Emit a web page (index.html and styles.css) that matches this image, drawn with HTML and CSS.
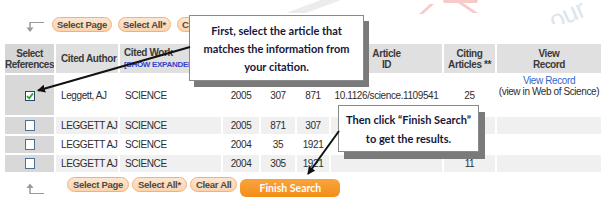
FILE: index.html
```html
<!DOCTYPE html>
<html lang="en">
<head>
<meta charset="utf-8">
<title>Cited Reference Search - Select References</title>
<link rel="stylesheet" href="styles.css">
</head>
<body>
<div class="page">
  <svg class="watermark" width="613" height="24" viewBox="0 0 613 24" aria-hidden="true">
    <polygon points="286,13 306,13 341,0 321,0" fill="#ececec"/>
    <polygon points="419,14 423,14 434,4 430,4" fill="#f7caca"/>
    <polygon points="443,0 478,0 477,3 444,3" fill="#f7caca"/>
    <polygon points="458,3 463,3 478,13 473,13" fill="#f7caca"/>
    <text x="548" y="22" transform="rotate(-24 570 12)" class="wm-text">our</text>
  </svg>

  <div class="toolbar toolbar-top">
    <svg class="nav-icon" width="20" height="12" viewBox="0 0 20 12" aria-hidden="true">
      <path d="M5 1.5 H19" stroke="#9a9a9a" stroke-width="1" fill="none"/>
      <path d="M5 1 V7" stroke="#9a9a9a" stroke-width="1.5" fill="none"/>
      <polygon points="1.5,6.5 8.5,6.5 5,11" fill="#9a9a9a"/>
    </svg>
    <span class="btn">Select Page</span>
    <span class="btn">Select All*</span>
    <span class="btn">Clear All</span>
  </div>

  <table class="refs">
    <colgroup>
      <col class="c-sel"><col class="c-author"><col class="c-work"><col class="c-year"><col class="c-vol"><col class="c-page"><col class="c-id"><col class="c-citing"><col class="c-view">
    </colgroup>
    <thead>
      <tr>
        <th class="sel center">Select<br>References</th>
        <th class="left">Cited Author</th>
        <th class="left top">Cited Work<br><a class="expand" href="#">[SHOW EXPANDED TITLES]</a></th>
        <th class="center"></th>
        <th class="center"></th>
        <th class="center"></th>
        <th class="center">Article<br>ID</th>
        <th class="center">Citing<br>Articles **</th>
        <th class="center">View<br>Record</th>
      </tr>
    </thead>
    <tbody>
      <tr class="row-tall">
        <td class="sel center"><span class="cb checked"><svg width="8" height="8" viewBox="0 0 8 8"><path d="M1 4.2 L3.2 6.4 L7 1.4" stroke="#2fa82f" stroke-width="1.8" fill="none"/></svg></span></td>
        <td>Leggett, AJ</td>
        <td>SCIENCE</td>
        <td class="center">2005</td>
        <td class="center">307</td>
        <td class="center">871</td>
        <td class="center">10.1126/science.1109541</td>
        <td class="center">25</td>
        <td class="center view"><a class="link" href="#">View Record</a><br>(view in Web of Science)</td>
      </tr>
      <tr class="stripe">
        <td class="sel center"><span class="cb"></span></td>
        <td>LEGGETT AJ</td>
        <td>SCIENCE</td>
        <td class="center">2005</td>
        <td class="center">871</td>
        <td class="center">307</td>
        <td></td>
        <td class="center"></td>
        <td></td>
      </tr>
      <tr>
        <td class="sel center"><span class="cb"></span></td>
        <td>LEGGETT AJ</td>
        <td>SCIENCE</td>
        <td class="center">2004</td>
        <td class="center">35</td>
        <td class="center">1921</td>
        <td></td>
        <td class="center"></td>
        <td></td>
      </tr>
      <tr class="stripe">
        <td class="sel center"><span class="cb"></span></td>
        <td>LEGGETT AJ</td>
        <td>SCIENCE</td>
        <td class="center">2004</td>
        <td class="center">305</td>
        <td class="center">1921</td>
        <td></td>
        <td class="center">11</td>
        <td></td>
      </tr>
    </tbody>
  </table>

  <div class="toolbar toolbar-bottom">
    <svg class="nav-icon" width="20" height="12" viewBox="0 0 20 12" aria-hidden="true">
      <polygon points="1.5,5 8.5,5 5,0.5" fill="#9a9a9a"/>
      <path d="M5 5 V11" stroke="#9a9a9a" stroke-width="1.5" fill="none"/>
      <path d="M5 10.5 H19" stroke="#9a9a9a" stroke-width="1" fill="none"/>
    </svg>
    <span class="btn">Select Page</span>
    <span class="btn">Select All*</span>
    <span class="btn">Clear All</span>
    <span class="btn-finish">Finish Search</span>
  </div>

  <div class="callout callout-first">First, select the article that<br>matches the information from<br>your citation.</div>
  <div class="callout callout-then">Then click “Finish Search”<br>to get the results.</div>

  <svg class="arrows" width="613" height="213" viewBox="0 0 613 213" aria-hidden="true">
    <defs>
      <marker id="head" markerWidth="8" markerHeight="8" refX="7" refY="4" orient="auto" markerUnits="userSpaceOnUse">
        <polygon points="0,0 8,4 0,8" fill="#111"/>
      </marker>
    </defs>
    <line x1="190" y1="47" x2="38" y2="90.5" stroke="#111" stroke-width="2" marker-end="url(#head)"/>
    <line x1="339" y1="131" x2="308" y2="174" stroke="#111" stroke-width="2" marker-end="url(#head)"/>
  </svg>
</div>
</body>
</html>
```

FILE: styles.css
```css
* { box-sizing: border-box; }

html, body {
  margin: 0;
  padding: 0;
  background: #ffffff;
}

body {
  font-family: "Liberation Sans", Arial, sans-serif;
  font-size: 10px;
  letter-spacing: -0.4px;
  color: #2e2e2e;
}

.page {
  position: relative;
  width: 613px;
  height: 213px;
  overflow: hidden;
}

.watermark {
  position: absolute;
  left: 0;
  top: 0;
  pointer-events: none;
}

.wm-text {
  font-family: "Liberation Sans", Arial, sans-serif;
  font-size: 26px;
  fill: #dde5ef;
}

/* toolbars */
.toolbar {
  display: flex;
  align-items: flex-start;
  padding-left: 25px;
}

.toolbar-top {
  padding-top: 17px;
  gap: 6px;
}

.toolbar-top .nav-icon {
  margin-top: 4px;
  margin-right: 1px;
}

.toolbar-bottom {
  padding-top: 3px;
  gap: 3px;
}

.toolbar-bottom .nav-icon {
  margin-top: 6px;
  margin-right: 19px;
}

.btn {
  display: inline-flex;
  align-items: center;
  height: 15px;
  padding: 0 4px;
  border: 1px solid #f1b27a;
  border-radius: 8px;
  background: linear-gradient(#fee6cf, #fbd3ad);
  color: #4a4a4a;
  font-weight: bold;
  font-size: 9.5px;
  letter-spacing: -0.3px;
  white-space: nowrap;
}

.toolbar-bottom .btn {
  padding: 0 5px;
}

.btn-finish {
  display: inline-flex;
  align-items: center;
  justify-content: center;
  width: 100px;
  height: 18px;
  margin-top: 2px;
  border-radius: 6px;
  background: linear-gradient(#f9a440, #f58d17);
  color: #ffffff;
  font-family: Lato, "Liberation Sans", sans-serif;
  font-weight: bold;
  font-size: 10.5px;
  letter-spacing: 0;
}

/* table */
.refs {
  margin: 9px 0 0 3px;
  width: 600px;
  table-layout: fixed;
  border-collapse: separate;
  border-spacing: 2px;
}

.c-sel { width: 49px; }
.c-author { width: 62px; }
.c-work { width: 101px; }
.c-year { width: 36px; }
.c-vol { width: 34px; }
.c-page { width: 32px; }
.c-id { width: 111px; }
.c-citing { width: 51px; }
.c-view { width: 104px; }

.refs th {
  height: 29px;
  padding: 0;
  background: #e0e0e0;
  color: #3a3a3a;
  font-weight: bold;
  font-size: 10px;
  line-height: 11px;
  vertical-align: middle;
  white-space: nowrap;
  overflow: hidden;
}

.refs th.sel {
  background: #d6d6d6;
  letter-spacing: -0.5px;
}

.refs th.left,
.refs td {
  text-align: left;
  padding-left: 5px;
}

.refs th.top {
  vertical-align: top;
  padding-top: 3px;
  padding-left: 4px;
}

.refs td {
  height: 17px;
  padding-top: 0;
  padding-bottom: 0;
  padding-right: 0;
  vertical-align: middle;
  white-space: nowrap;
  line-height: 11px;
}

.refs .center {
  text-align: center;
  padding-left: 0;
  padding-right: 0;
}

.refs .sel {
  background: #d8d8d8;
}

.refs .stripe td {
  background: #f0f0f0;
}

.refs .stripe td.sel {
  background: #d8d8d8;
}

.row-tall td {
  height: 40px;
}

.row-tall td.view {
  vertical-align: top;
  padding-top: 0;
}

.expand {
  color: #3344cc;
  font-size: 8px;
  letter-spacing: -0.3px;
  text-decoration: none;
}

.link {
  color: #3366cc;
  text-decoration: none;
}

.cb {
  display: inline-flex;
  align-items: center;
  justify-content: center;
  width: 10px;
  height: 11px;
  border: 1px solid #4f6e9c;
  background: #ffffff;
  vertical-align: middle;
}

.cb.checked {
  border-color: #27466f;
  height: 10px;
}

/* callouts */
.callout {
  position: absolute;
  background: #ffffff;
  border: 1px solid #8a8a8a;
  color: #17173a;
  font-family: Lato, "Liberation Sans", sans-serif;
  font-weight: bold;
  font-size: 11px;
  letter-spacing: 0;
  text-align: center;
}

.callout-first {
  left: 189px;
  top: 15px;
  width: 175px;
  height: 66px;
  padding-top: 6px;
  line-height: 18px;
  box-shadow: 5px 6px 0 #7a7a7a;
}

.callout-then {
  left: 338px;
  top: 105px;
  width: 141px;
  height: 47px;
  padding-top: 4px;
  line-height: 19px;
  box-shadow: 6px 7px 0 #7a7a7a;
}

.arrows {
  position: absolute;
  left: 0;
  top: 0;
  pointer-events: none;
}
```
